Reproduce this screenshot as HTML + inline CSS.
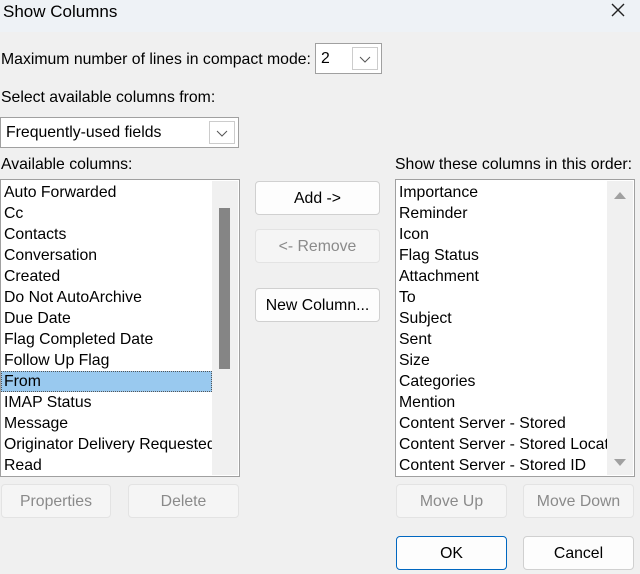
<!DOCTYPE html>
<html><head><style>
*{box-sizing:border-box;margin:0;padding:0}
body{width:640px;height:574px;background:#f0f0f0;font-family:"Liberation Sans",sans-serif;font-size:15.8px;color:#000;position:relative;overflow:hidden}
.a{position:absolute}
.title{left:0;top:0;width:640px;height:32px;background:#eef2f6}
.btn{position:absolute;height:34px;border:1px solid #d0d0d0;border-radius:4px;background:#fdfdfd;text-align:center;line-height:34px}
.dis{background:#f5f5f5;color:#8a8a8a;border-color:#e3e3e3}
.list{position:absolute;background:#fff;border:1px solid #a0a0a0}
.list div{height:21px;line-height:22px;padding-left:3px;white-space:nowrap;overflow:hidden}
.sb{position:absolute;top:1px;bottom:1px;width:26px;background:#f0f0f0}
.combo{position:absolute;background:#fff;border:1px solid #a0a0a0}
.dd{position:absolute;top:3px;right:3px;width:26px;bottom:3px;border:1px solid #ccc;background:#fff}
</style></head><body>
<div class="a title"></div>
<div class="a" style="left:3px;top:1px;font-size:17px;line-height:22px">Show Columns</div>
<svg class="a" style="left:611px;top:3px" width="14" height="14"><path d="M1 1L13 13M13 1L1 13" stroke="#222" stroke-width="1.4"/></svg>
<div class="a" style="left:1px;top:51px">Maximum number of lines in compact mode:</div>
<div class="combo" style="left:315px;top:43px;width:67px;height:31px"><span class="a" style="left:5px;top:6px">2</span><div class="dd"><svg width="24" height="22"><path d="M7 9l5 5 5-5" fill="none" stroke="#555"/></svg></div></div>
<div class="a" style="left:1px;top:89px">Select available columns from:</div>
<div class="combo" style="left:0;top:117px;width:239px;height:31px"><span class="a" style="left:5px;top:6px">Frequently-used fields</span><div class="dd"><svg width="24" height="22"><path d="M7 9l5 5 5-5" fill="none" stroke="#555"/></svg></div></div>
<div class="a" style="left:1px;top:156px">Available columns:</div>
<div class="a" style="left:395px;top:156px">Show these columns in this order:</div>
<div class="list" style="left:0;top:179px;width:240px;height:298px;padding-top:2px">
<div>Auto Forwarded</div><div>Cc</div><div>Contacts</div><div>Conversation</div><div>Created</div><div>Do Not AutoArchive</div><div>Due Date</div><div>Flag Completed Date</div><div>Follow Up Flag</div><div style="background:#99c9ef;outline:1px dotted #555;outline-offset:-1px;width:211px">From</div><div>IMAP Status</div><div>Message</div><div style="width:211px">Originator Delivery Requested</div><div>Read</div>
<span class="sb" style="right:1px"><span class="a" style="left:7px;top:27px;width:11px;height:161px;background:#858585"></span></span>
</div>
<div class="list" style="left:395px;top:179px;width:240px;height:298px;padding-top:2px">
<div>Importance</div><div>Reminder</div><div>Icon</div><div>Flag Status</div><div>Attachment</div><div>To</div><div>Subject</div><div>Sent</div><div>Size</div><div>Categories</div><div>Mention</div><div>Content Server - Stored</div><div style="width:211px">Content Server - Stored Location</div><div>Content Server - Stored ID</div>
<span class="sb" style="right:1px"><svg class="a" style="left:6px;top:9px" width="14" height="10"><path d="M1 9L7 2 13 9Z" fill="#a0a0a0"/></svg><svg class="a" style="left:6px;top:277px" width="14" height="10"><path d="M1 1L7 8 13 1Z" fill="#a0a0a0"/></svg></span>
</div>
<div class="btn" style="left:255px;top:181px;width:125px">Add -&gt;</div>
<div class="btn dis" style="left:255px;top:229px;width:125px">&lt;- Remove</div>
<div class="btn" style="left:255px;top:288px;width:125px">New Column...</div>
<div class="btn dis" style="left:1px;top:484px;width:110px">Properties</div>
<div class="btn dis" style="left:128px;top:484px;width:111px">Delete</div>
<div class="btn dis" style="left:396px;top:484px;width:111px">Move Up</div>
<div class="btn dis" style="left:523px;top:484px;width:111px">Move Down</div>
<div class="btn" style="left:396px;top:536px;width:111px;border:1px solid #0067c0">OK</div>
<div class="btn" style="left:523px;top:536px;width:111px">Cancel</div>
</body></html>
